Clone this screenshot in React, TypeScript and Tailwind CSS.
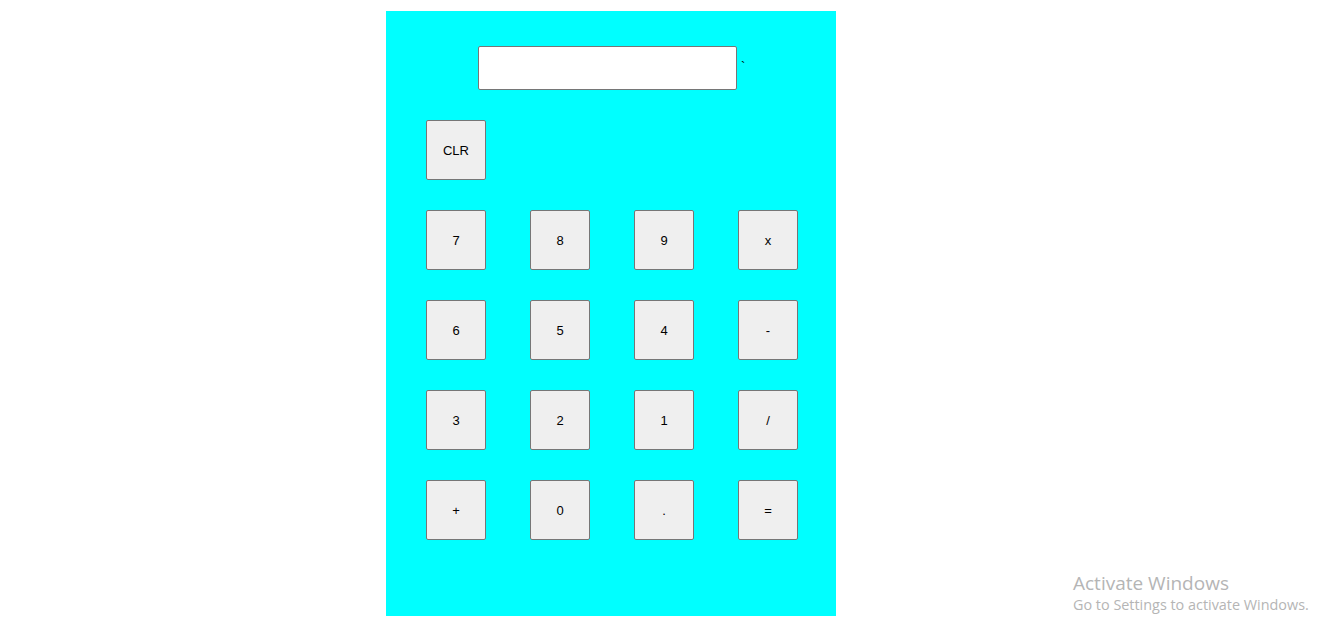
const rows = [
  ["7", "8", "9", "x"],
  ["6", "5", "4", "-"],
  ["3", "2", "1", "/"],
  ["+", "0", ".", "="],
];

function Key({ label }: { label: string }) {
  return (
    <button className="h-[60px] w-[60px] rounded-[2px] border border-[#767676] bg-[#efefef] pt-[2px] text-[13px] text-black">
      {label}
    </button>
  );
}

export default function App() {
  return (
    <div className="relative h-[639px] w-full bg-white font-['Liberation_Sans',Arial,sans-serif]">
      <div className="ml-[386px] pt-[11px]">
        <div className="flex h-[605px] w-[450px] flex-col gap-[30px] bg-[#00ffff] pt-[35px] pl-[40px]">
          <div className="flex items-start pl-[52px]">
            <input
              type="text"
              className="h-[44px] w-[259px] rounded-[2px] border border-[#767676] bg-white outline-none"
            />
            <span className="ml-[4px] mt-[14px] text-[13px] leading-none text-black">`</span>
          </div>
          <div className="flex">
            <Key label="CLR" />
          </div>
          {rows.map((row) => (
            <div key={row.join("")} className="flex gap-[44px]">
              {row.map((k) => (
                <Key key={k} label={k} />
              ))}
            </div>
          ))}
        </div>
      </div>
      <div className="absolute left-[1073px] top-[571px] font-['Open_Sans','Noto_Sans',sans-serif] text-[#b5b5b5]">
        <div className="text-[19px] leading-[24px]">Activate Windows</div>
        <div className="text-[14.4px] leading-[20px]">Go to Settings to activate Windows.</div>
      </div>
    </div>
  );
}
